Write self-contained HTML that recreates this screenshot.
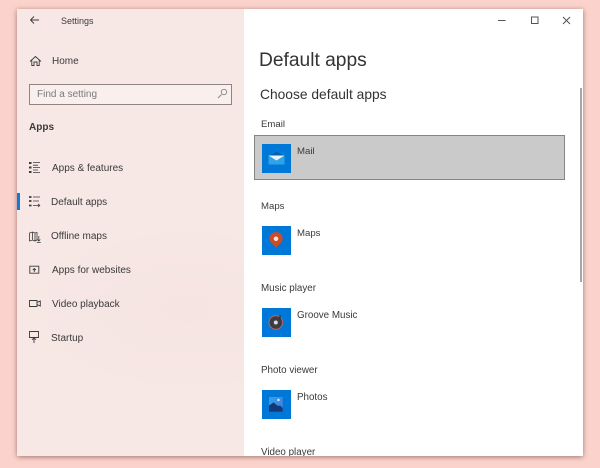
<!DOCTYPE html>
<html><head><meta charset="utf-8"><style>
html,body{margin:0;padding:0;width:600px;height:468px;overflow:hidden;background:#fcd3cc;font-family:"Liberation Sans",sans-serif}
#win{position:absolute;left:17px;top:9px;width:566px;height:447px;background:#fff;box-shadow:0 1px 5px rgba(90,40,35,.55);overflow:hidden}
#side{position:absolute;left:0;top:0;width:227px;height:447px;background:radial-gradient(ellipse 170px 90px at 170px 300px,#f6e4e1,#f7e8e5)}
.t{position:absolute;white-space:nowrap;font-size:10px;color:#3a3a3a;line-height:12px;filter:blur(.35px)}
svg{position:absolute;overflow:visible;filter:blur(.25px)}
svg .s{fill:none;stroke:#3a3a3a;stroke-width:.9}
.i{position:absolute;left:245px;width:28.500px;height:28.500px;background:#0078d7}
</style></head><body>
<div id="win"><div id="side"></div>
<div style="position:absolute;left:0;top:184px;width:3px;height:17px;background:#0a7ce0"></div>
<div style="position:absolute;left:12px;top:74.500px;width:201px;height:19.500px;border:1.200px solid #8f8584;background:#f9efed"></div>
<div style="position:absolute;left:237px;top:126px;width:309px;height:42.500px;border:1.500px solid #858585;background:#cacaca"></div>
<div style="position:absolute;left:563px;top:79px;width:2px;height:194px;background:#a6a6a6"></div>
<div class="i" style="top:135px"></div><div class="i" style="top:217px"></div><div class="i" style="top:299px"></div><div class="i" style="top:381px"></div>
</div>

<div class="t" style="left:61px;top:15px;font-size:9px">Settings</div>
<div class="t" style="left:52px;top:56px;font-size:10px">Home</div>
<div class="t" style="left:37px;top:89px;font-size:10px;color:#7a7a7a">Find a setting</div>
<div class="t" style="left:29px;top:122px;font-size:10px;font-weight:bold">Apps</div>
<div class="t" style="left:52px;top:163px;font-size:10px">Apps &amp; features</div>
<div class="t" style="left:51px;top:197px;font-size:10px">Default apps</div>
<div class="t" style="left:51px;top:231px;font-size:10px">Offline maps</div>
<div class="t" style="left:52px;top:265px;font-size:10px">Apps for websites</div>
<div class="t" style="left:52px;top:299px;font-size:10px">Video playback</div>
<div class="t" style="left:51px;top:333px;font-size:10px">Startup</div>

<div class="t" style="left:259px;top:48px;font-size:19.200px;line-height:26px;color:#333">Default apps</div>
<div class="t" style="left:260px;top:86px;font-size:13.800px;line-height:18px;color:#333">Choose default apps</div>
<div class="t" style="left:261px;top:119px;font-size:9.600px">Email</div>
<div class="t" style="left:297px;top:146px;font-size:9.600px">Mail</div>
<div class="t" style="left:261px;top:201px;font-size:9.600px">Maps</div>
<div class="t" style="left:297px;top:228px;font-size:9.600px">Maps</div>
<div class="t" style="left:261px;top:283px;font-size:9.800px">Music player</div>
<div class="t" style="left:297px;top:310px;font-size:9.800px">Groove Music</div>
<div class="t" style="left:261px;top:365px;font-size:9.800px">Photo viewer</div>
<div class="t" style="left:297px;top:392px;font-size:9.800px">Photos</div>
<div style="position:absolute;left:261px;top:446px;width:100px;height:10px;overflow:hidden"><div class="t" style="left:0;top:1px;font-size:9.800px">Video player</div></div>

<svg width="600" height="468" style="left:0;top:0">
<path class="s" d="M30.500 20H39M30.500 20L34 16.500M30.500 20L34 23.500"/>
<path class="s" d="M30 61.500L35.500 56.500L41 61.500M31.800 60V65.500H34V62H37V65.500H39.200V60"/>
<path d="M218 98L221.500 94.500" stroke="#888" fill="none"/><circle cx="224" cy="92" r="2.700" fill="none" stroke="#888" stroke-width=".9"/>
<path class="s" d="M29 163H31.500M29 167.500H31.500M29 172H31.500" style="stroke-width:2"/><path class="s" d="M33 162.500H40M33 165.200H38M33 167.500H40M33 170H38M33 172.500H40" style="stroke-width:.8"/>
<path class="s" d="M29 197H31.500M29 201H31.500M29 205.500H31.500" style="stroke-width:1.800"/><path class="s" d="M33 197H40M33 201H39M33 205.500H39.500M38 203.800L39.800 205.500L38 207" style="stroke-width:.8"/>
<path class="s" d="M29.500 233V241L32.500 240L35 241L37 240V232.500L35 233L32.500 232L29.500 233ZM32.500 232V240M35 233V241" style="stroke-width:.8"/><path class="s" d="M38.800 236V241M36.800 242.500H40.800M37.300 239.500L38.800 241L40.300 239.500" style="stroke-width:.8"/>
<path class="s" d="M29.800 266.200H38.800V273.200H29.800ZM34.300 272V268.500M32.800 270L34.300 268.500L35.800 270"/>
<path class="s" d="M29.500 300.500H37V306.500H29.500ZM37 302.500L40.300 301V306L37 304.500"/>
<path class="s" d="M29.500 331.500H38.500V337.500H29.500ZM34 337.500V343M32 339.800L34 338L36 339.800"/>
<path d="M498 20.500H505.500" stroke="#555" fill="none"/>
<rect x="531.500" y="17" width="6.500" height="6.500" fill="none" stroke="#555"/>
<path d="M563 17L570 24M570 17L563 24" stroke="#555" fill="none"/>
<path d="M269 156L276.500 151.500L284 156Z" fill="#0a5fae"/>
<rect x="268.500" y="155.500" width="16" height="9" fill="#2ea3e8"/>
<path d="M268.500 155.500L276.500 160.500L284.500 155.500Z" fill="#e6f4fd"/>
<path d="M276 247.800C272.500 244 269.300 241.500 269.300 238.800A6.700 6.700 0 0 1 282.700 238.800C282.700 241.500 279.500 244 276 247.800Z" fill="#cf4b25"/>
<circle cx="276" cy="238.800" r="2.300" fill="#f6e5dc"/>
<circle cx="275.800" cy="322.500" r="6.800" fill="#3c3c44" stroke="#b06a70" stroke-width="1"/>
<circle cx="275.800" cy="322.500" r="2" fill="#ddd"/>
<path d="M280 315.500V320" stroke="#333" stroke-width="1.500"/>
<defs><linearGradient id="g" x1="0" y1="0" x2="1" y2="1"><stop offset="0" stop-color="#2fa3ea"/><stop offset="1" stop-color="#4a78dc"/></linearGradient></defs>
<rect x="269" y="397" width="13.700" height="14.700" fill="url(#g)"/>
<path d="M269 411.700V405.500L273.500 402.500L278 406L280 405.500L282.700 408V411.700Z" fill="#123a78"/>
<circle cx="278.500" cy="400" r="1.200" fill="#d8ecfb"/>
</svg>
</body></html>
